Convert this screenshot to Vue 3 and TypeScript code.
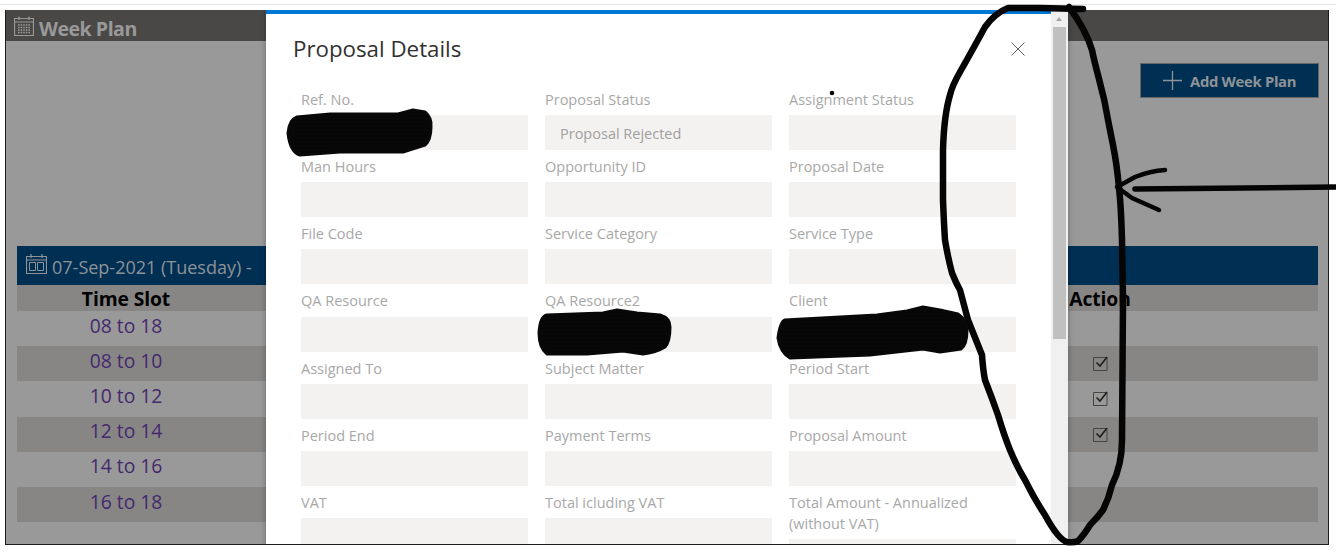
<script setup lang="ts">
const fields: { label: string; value?: string }[] = [
  { label: 'Ref. No.' },
  { label: 'Proposal Status', value: 'Proposal Rejected' },
  { label: 'Assignment Status' },
  { label: 'Man Hours' },
  { label: 'Opportunity ID' },
  { label: 'Proposal Date' },
  { label: 'File Code' },
  { label: 'Service Category' },
  { label: 'Service Type' },
  { label: 'QA Resource' },
  { label: 'QA Resource2' },
  { label: 'Client' },
  { label: 'Assigned To' },
  { label: 'Subject Matter' },
  { label: 'Period Start' },
  { label: 'Period End' },
  { label: 'Payment Terms' },
  { label: 'Proposal Amount' },
  { label: 'VAT' },
  { label: 'Total icluding VAT' },
  { label: 'Total Amount - Annualized (without VAT)' },
]
const slots = [
  { time: '08 to 18', check: false },
  { time: '08 to 10', check: true },
  { time: '10 to 12', check: true },
  { time: '12 to 14', check: true },
  { time: '14 to 16', check: false },
  { time: '16 to 18', check: false },
]
const loop =
  'M1083 9 L1040 8 L1008 8 Q995 13 985 27 L979 38 Q968 58 960 72 Q952 86 950 95 Q944 115 943 150 L943 200 Q944 225 945 240 Q948 258 952 273 Q956 283 960 290 Q964 305 968 320 Q976 340 982 355 Q983 370 985 380 Q992 398 998 415 Q1004 435 1010 450 Q1017 467 1025 480 Q1035 500 1045 515 Q1052 528 1058 535 Q1063 541 1067 542 Q1074 543 1078 541 Q1084 535 1090 525 Q1098 517 1103 510 Q1109 498 1112 485 Q1122 465 1122 440 L1123 300 L1122 240 Q1121 205 1119 188 Q1117 165 1113 145 Q1110 130 1109 125 Q1105 100 1098 75 Q1094 60 1092 50 Q1086 30 1069 7'
</script>

<template>
  <div class="page">
    <div class="top-rule"></div>
    <section class="panel">
      <header class="panel-head">
        <svg class="head-icon" viewBox="0 0 20 20" fill="none" stroke="currentColor">
          <path d="M.5 2.500h19v17H.5zM.5 6h19M5 .5v3.500M15 .5v3.500" stroke-width="1.200" />
          <path d="M4 9h12M4 11.500h12M4 14h12M4 16.500h12" stroke-width="1.500" stroke-dasharray="1.600 1" />
        </svg>
        <h1>Week Plan</h1>
      </header>
      <div class="panel-body">
        <div class="actions">
          <button class="add-btn" type="button">
            <svg viewBox="0 0 19 19" fill="none" stroke="currentColor" stroke-width="1.300"><path d="M9.500 0v19M0 9.500h19" /></svg>
            <span>Add Week Plan</span>
          </button>
        </div>
        <div class="date-bar">
          <svg viewBox="0 0 21 22" fill="none" stroke="currentColor">
            <path d="M.5 3.500h20v17H.5zM.5 7h20M5 1v4M16 1v4" stroke-width="1.200" />
            <path d="M3.500 9.500h6v8h-6zM11.500 9.500h6v8h-6z" />
          </svg>
          <span>07-Sep-2021 (Tuesday) -</span>
        </div>
        <div class="row head">
          <div class="slot">Time Slot</div>
          <div></div>
          <div class="act">Action</div>
          <div></div>
        </div>
        <div v-for="s in slots" :key="s.time" class="row">
          <div class="slot link">{{ s.time }}</div>
          <div></div>
          <div class="act">
            <svg v-if="s.check" viewBox="0 0 15 15" fill="none">
              <path d="M.5 1.500h13.500v13H.5z" stroke="#45443f" />
              <path d="M3.500 6.500l3.500 3.500 7-9" stroke="#1f1f1f" stroke-width="1.600" />
            </svg>
          </div>
          <div></div>
        </div>
      </div>

      <div class="modal">
        <div class="modal-main">
          <div class="modal-head">
            <h2>Proposal Details</h2>
            <svg class="close" viewBox="0 0 14 14" fill="none" stroke="#605e5c"><path d="M.5.500l13 13M13.500.500l-13 13" /></svg>
          </div>
          <div class="form">
            <div v-for="f in fields" :key="f.label" class="field">
              <label>{{ f.label }}</label>
              <div class="input">{{ f.value }}</div>
            </div>
          </div>
        </div>
        <div class="scrollbar">
          <i class="arrow up"></i>
          <div class="thumb"></div>
          <i class="arrow down"></i>
        </div>
      </div>
    </section>

    <svg class="ink" viewBox="0 0 1336 556" fill="none" stroke="#050505" stroke-linecap="round" stroke-linejoin="round">
      <defs>
        <pattern id="scrub" width="4" height="4" patternUnits="userSpaceOnUse">
          <rect width="4" height="4" fill="#080808" />
          <rect x="1" y="2" width="1" height="1" fill="#333" />
        </pattern>
      </defs>
      <path :d="loop" stroke-width="6.500" />
      <path d="M1165 170 Q1150 171 1135 177 L1117 187 L1132 198 L1159 210" stroke-width="4.500" />
      <path d="M1135 189 L1336 187" stroke-width="5.500" />
      <g fill="url(#scrub)" stroke="#080808" stroke-width="3">
        <path d="M288 133 Q289 120 297 117 L330 114 L398 114 L413 110 L425 112 Q432 118 431 127 Q431 140 425 145 L403 152 L340 152 L300 155 Q290 152 288 133z" />
        <path d="M539 333 Q540 316 547 315 L603 313 L617 310 L637 313 L660 315 Q670 318 670 327 Q670 342 665 347 Q655 353 643 354 L623 351 L587 354 L547 354 Q539 348 539 333z" />
        <path d="M778 338 Q780 322 785 320 L877 315 L907 311 L923 307 L940 310 L958 314 Q967 320 967 330 Q967 345 961 349 L940 352 L923 349 L870 355 L790 358 Q780 352 778 338z" />
      </g>
      <circle cx="832" cy="93" r="2.300" fill="#050505" stroke="none" />
    </svg>
  </div>
</template>

<style>
html, body { margin: 0; background: #fff; overflow: hidden; }
</style>

<style scoped>
.page {
  position: relative;
  width: 1336px;
  height: 556px;
  overflow: hidden;
  background: #fff;
  font-family: "Open Sans", "Noto Sans", sans-serif;
}
.top-rule { height: 1px; margin-top: 4px; background: #e6e6e6; }
.panel {
  position: relative;
  box-sizing: border-box;
  width: 1324px;
  height: 535px;
  margin: 5px 0 0 5px;
  border: 1px solid #1c1c1c;
  border-top: 0;
  background: #999;
  overflow: hidden;
}
.panel-head {
  display: flex;
  align-items: center;
  gap: 5px;
  height: 31px;
  padding-left: 8px;
  background: #494847;
  color: #999;
}
.head-icon { width: 20px; height: 20px; }
.panel-head h1 { margin: 6px 0 0; font-size: 19.600px; font-weight: 700; letter-spacing: -.5px; }
.panel-body { padding: 22px 10px 0 11px; }
.actions { display: flex; justify-content: flex-end; height: 183px; }
.add-btn {
  display: flex;
  align-items: center;
  gap: 8px;
  box-sizing: border-box;
  width: 179px;
  height: 35px;
  margin-right: -1px;
  padding: 1px 0 0 22px;
  border: 1px solid #666;
  background: #002f54;
  color: #8e9397;
  font: 700 14.800px "Open Sans", sans-serif;
  letter-spacing: -.3px;
}
.add-btn svg { width: 19px; height: 19px; margin-top: -2px; }
.date-bar {
  display: flex;
  align-items: center;
  gap: 5px;
  height: 39px;
  padding-left: 9px;
  background: #002f54;
  color: #8e9397;
  font-size: 18px;
  white-space: nowrap;
}
.date-bar span { margin-top: 2px; }
.date-bar svg { width: 21px; height: 22px; margin-top: -4px; }
.row {
  display: grid;
  grid-template-columns: 218px 1fr 60px 188px;
  height: 35.200px;
  align-items: center;
  text-align: center;
  font-size: 19.300px;
  color: #44296e;
}
.row:nth-child(odd) { background: #878685; }
.row.head {
  height: 26px;
  background: #878685;
  color: #000;
  font-weight: 700;
  font-size: 19.300px;
  letter-spacing: -.1px;
}
.row:not(.head) .slot { margin-top: -7px; }
.act { display: flex; justify-content: center; }
.act svg { width: 15px; height: 15px; }

.modal {
  position: absolute;
  top: 0;
  left: 260px;
  display: flex;
  width: 802px;
  height: 540px;
  background: #fff;
  box-shadow: 0 0 6px rgba(0, 0, 0, .3);
}
.modal-main { flex: 1; min-width: 0; border-top: 4px solid #0078d4; }
.modal-head {
  display: flex;
  align-items: center;
  justify-content: space-between;
  height: 28px;
  padding: 21px 26px 20px 27px;
}
.modal-head h2 { margin: -2px 0 0; font-size: 22.300px; font-weight: 400; color: #323130; }
.close { width: 14px; height: 14px; }
.form {
  display: grid;
  grid-template-columns: repeat(3, 227px);
  column-gap: 17px;
  align-items: start;
  margin-left: 35px;
}
.field label {
  display: block;
  box-sizing: border-box;
  padding: 6px 0 5.170px;
  font-size: 14.500px;
  line-height: 21px;
  color: #a8a8a8;
}
.input {
  box-sizing: border-box;
  height: 35px;
  padding: 0 15px;
  background: #f3f2f1;
  color: #a19f9d;
  font-size: 14.500px;
  line-height: 38px;
}
.scrollbar {
  position: relative;
  flex: 0 0 17px;
  box-sizing: border-box;
  padding: 17px 2px 0;
  background: #f0f0f0;
}
.thumb { height: 312px; background: #c0c0c0; }
.arrow {
  position: absolute;
  left: 5px;
  width: 0;
  height: 0;
  border-left: 3.500px solid transparent;
  border-right: 3.500px solid transparent;
}
.arrow.up { top: 7px; border-bottom: 4px solid #a6a6a6; }
.arrow.down { top: 524px; border-top: 4px solid #a6a6a6; }

.ink { position: absolute; inset: 0; width: 1336px; height: 556px; pointer-events: none; }
</style>
